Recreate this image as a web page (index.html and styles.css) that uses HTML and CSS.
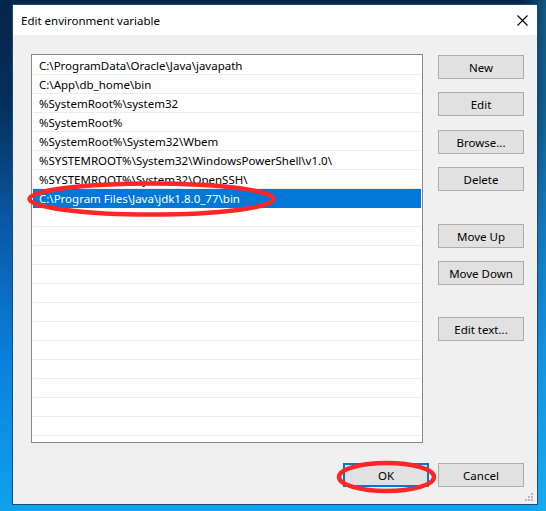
FILE: index.html
```html
<!DOCTYPE html>
<html lang="en">
<head>
<meta charset="utf-8"/>
<title>Edit environment variable</title>
<meta content="width=device-width, initial-scale=1" name="viewport"/>
<link rel="stylesheet" href="styles.css">
</head>
<body>
<div class="desktop">
<!-- Dialog window -->
<div class="window">
  <div class="titlebar">
    <span class="title">Edit environment variable</span>
    <button class="close-btn" aria-label="Close">
      <svg width="11" height="11" viewBox="0 0 11 11"><path d="M0.5 0.5 L10.5 10.5 M10.5 0.5 L0.5 10.5" stroke="#000" stroke-width="1.1" fill="none"/></svg>
    </button>
  </div>
  <div class="content">
    <div class="main">
      <div class="list">
        <div class="row">C:\ProgramData\Oracle\Java\javapath</div>
        <div class="row">C:\App\db_home\bin</div>
        <div class="row">%SystemRoot%\system32</div>
        <div class="row">%SystemRoot%</div>
        <div class="row">%SystemRoot%\System32\Wbem</div>
        <div class="row">%SYSTEMROOT%\System32\WindowsPowerShell\v1.0\</div>
        <div class="row">%SYSTEMROOT%\System32\OpenSSH\</div>
        <div class="row selected">C:\Program Files\Java\jdk1.8.0_77\bin</div>
        <div class="row"></div>
        <div class="row"></div>
        <div class="row"></div>
        <div class="row"></div>
        <div class="row"></div>
        <div class="row"></div>
        <div class="row"></div>
        <div class="row"></div>
        <div class="row"></div>
        <div class="row"></div>
        <div class="row"></div>
        <div class="row"></div>
        <div class="row"></div>
      </div>
      <div class="side">
        <button class="btn">New</button>
        <button class="btn">Edit</button>
        <button class="btn browse">Browse...</button>
        <button class="btn">Delete</button>
        <button class="btn move-up">Move Up</button>
        <button class="btn">Move Down</button>
        <button class="btn edit-text">Edit text...</button>
      </div>
    </div>
    <div class="footer">
      <button class="btn default">OK</button>
      <button class="btn">Cancel</button>
    </div>
    <svg class="grip" width="9" height="9" viewBox="0 0 9 9">
      <rect x="6" y="0" width="2" height="2" fill="#b9b9b9"/>
      <rect x="3" y="3" width="2" height="2" fill="#b9b9b9"/>
      <rect x="6" y="3" width="2" height="2" fill="#b9b9b9"/>
      <rect x="0" y="6" width="2" height="2" fill="#b9b9b9"/>
      <rect x="3" y="6" width="2" height="2" fill="#b9b9b9"/>
      <rect x="6" y="6" width="2" height="2" fill="#b9b9b9"/>
    </svg>
  </div>
</div>
<!-- Red marks drawn over the screenshot -->
<svg class="marks" width="546" height="511" viewBox="0 0 546 511">
  <ellipse cx="151.5" cy="199" rx="122" ry="15.5" fill="none" stroke="#ff2626" stroke-width="4.5"/>
  <ellipse cx="386.5" cy="477" rx="47.5" ry="14" fill="none" stroke="#ff2626" stroke-width="4.5"/>
</svg>
</div>
</body>
</html>
```

FILE: styles.css
```css
body {
    margin: 0;
    font-family: "Segoe UI", "Noto Sans", sans-serif;
    font-size: 11.5px;
    color: #000;
}

.desktop {
    position: relative;
    width: 546px;
    height: 511px;
    overflow: hidden;
    background:
        linear-gradient(90deg, rgba(3,30,60,0) 0%, rgba(3,30,60,0) 96%, rgba(40,190,240,0.35) 100%),
        linear-gradient(180deg, #03264a 0%, #052f5a 20%, #0a5aa8 45%, #0a80dc 70%, #10a2ee 100%);
}

/* Window */
.window {
    margin: 4px 0 0 12px;
    width: 524px;
    height: 499px;
    border: 1px solid #1e4a75;
    background: #f0f0f0;
    display: flex;
    flex-direction: column;
}

.titlebar {
    height: 30px;
    background: #fff;
    display: flex;
    align-items: center;
    justify-content: space-between;
    padding: 0 9px 0 8px;
}

.title {
    font-size: 11.5px;
    padding-top: 1px;
}

.close-btn {
    border: none;
    background: none;
    padding: 0;
    width: 11px;
    height: 11px;
    display: flex;
    margin-top: 1px;
}

.content {
    position: relative;
    flex: 1;
    padding: 19px 13px 0 18px;
}

.main {
    display: flex;
    gap: 15px;
}

/* List */
.list {
    border: 1px solid #828790;
    background: #fff;
    padding: 1px 1px 0;
    box-sizing: border-box;
    width: 392px;
    height: 389px;
    overflow: hidden;
}

.row {
    height: 18px;
    line-height: 19px;
    border-bottom: 1px solid #ececec;
    padding-left: 6px;
    white-space: nowrap;
}

.row.selected {
    background: #0078d7;
    color: #fff;
    border-bottom-color: #0078d7;
}

/* Buttons */
.side {
    display: flex;
    flex-direction: column;
    gap: 13px;
    padding-top: 1px;
}

.btn {
    width: 86px;
    height: 24px;
    box-sizing: border-box;
    border: 1px solid #adadad;
    background: #e1e1e1;
    font-family: inherit;
    font-size: 11.5px;
    color: #000;
    padding: 0;
}

.side .browse {
    margin-top: 1px;
}

.side .move-up {
    margin-top: 20px;
}

.side .edit-text {
    margin-top: 19px;
}

.footer {
    display: flex;
    justify-content: flex-end;
    gap: 9px;
    margin-top: 20px;
}

.btn.default {
    border: 2px solid #0078d7;
}

.grip {
    position: absolute;
    right: 3px;
    bottom: 2px;
}

.marks {
    position: absolute;
    top: 0;
    left: 0;
    pointer-events: none;
}
```
